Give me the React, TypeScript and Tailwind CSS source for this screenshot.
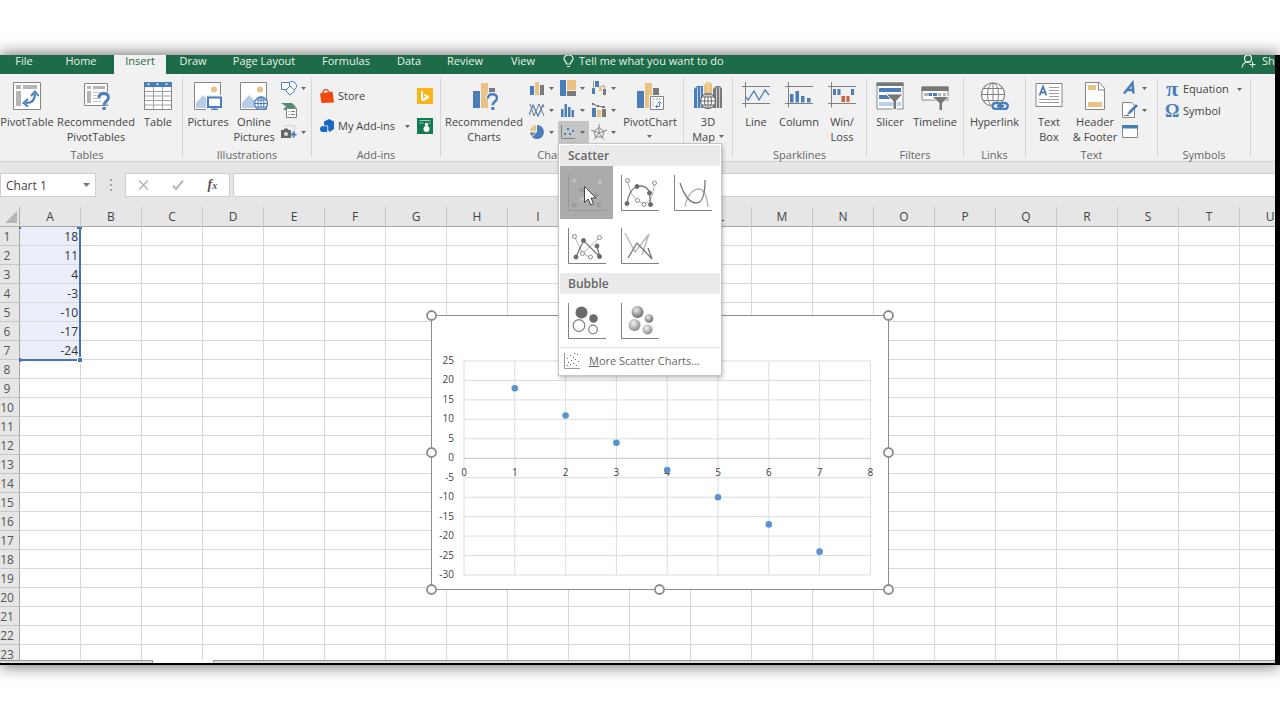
import type { ReactNode } from "react";

const BLUE = "#4a7ebb";
const TAN = "#eac282";
const GREY = "#7a7a7a";

const COLUMNS = "ABCDEFGHIJKLMNOPQRSTUVWXYZ".split("");
const ROWS = Array.from({ length: 23 }, (_, i) => i + 1);
const VALUES = [18, 11, 4, -3, -10, -17, -24];

const TABS = [
  { name: "File", width: "w-12" },
  { name: "Home", width: "w-[66px]" },
  { name: "Insert", width: "w-[52px]" },
  { name: "Draw", width: "w-[54px]" },
  { name: "Page Layout", width: "w-[88px]" },
  { name: "Formulas", width: "w-[76px]" },
  { name: "Data", width: "w-[50px]" },
  { name: "Review", width: "w-[62px]" },
  { name: "View", width: "w-[54px]" },
];

function Caret() {
  return (
    <svg width="5" height="3" viewBox="0 0 5 3" className="shrink-0">
      <path d="M0 0h5L2.5 3z" fill="#666" />
    </svg>
  );
}

function Icon({ size = 28, children }: { size?: number; children: ReactNode }) {
  return (
    <svg
      width={size}
      height={size}
      viewBox={`0 0 ${size} ${size}`}
      fill="none"
      className="shrink-0"
    >
      {children}
    </svg>
  );
}

/* Large icons, 28px */

function PivotTableIcon() {
  return (
    <Icon>
      <path d="M.5.5h27v27H.5z" fill="#fff" stroke="#858585" />
      <path d="M3 3h5v4H3zM10 3h14v4H10zM3 9h5v15H3z" fill="#b5b5b5" />
      <path d="M13 21c6 0 9-3 9-9" stroke={BLUE} strokeWidth="2.2" />
      <path
        d="M18 14l4-4.500 3.500 4.500M15 17l-4.500 4 4.500 3.500"
        stroke={BLUE}
        strokeWidth="2"
      />
    </Icon>
  );
}

function RecommendedPivotIcon() {
  return (
    <Icon>
      <path d="M2.500 1.500h23v22h-23z" fill="#fff" stroke="#858585" />
      <path d="M5 4h4v3H5zM11 4h12v3H11zM5 9h4v12H5z" fill="#b5b5b5" />
      <path d="M11 10.500h10M11 13.500h10M11 16.500h8M11 19.500h8" stroke="#c4c4c4" />
      <path
        d="M17 16c0-3 2-4.500 4.700-4.500s4.800 1.500 4.800 4.200c0 3.300-4.500 3.600-4.500 7.300"
        stroke="#f1f1f1"
        strokeWidth="5"
      />
      <path
        d="M17 16c0-3 2-4.500 4.700-4.500s4.800 1.500 4.800 4.200c0 3.300-4.500 3.600-4.500 7.300"
        stroke={BLUE}
        strokeWidth="2.800"
      />
      <path d="M20.500 25h3.200v3h-3.200z" fill={BLUE} />
    </Icon>
  );
}

function TableIcon() {
  return (
    <Icon>
      <path d="M.5.5h27v27H.5z" fill="#fff" stroke="#858585" />
      <path d="M0 0h28v5H0z" fill={BLUE} />
      <path d="M3 1.500h3L4.500 3.500zM12 1.500h3l-1.500 2zM21 1.500h3l-1.500 2z" fill="#fff" />
      <path d="M9.500 5v22M18.500 5v22M1 9.500h26M1 14h26M1 18.500h26M1 23h26" stroke="#a3a3a3" />
    </Icon>
  );
}

function PhotoBase() {
  return (
    <>
      <path d="M.5.5h26v27H.5z" fill="#fff" stroke="#858585" />
      <path d="M2 26v-5l7-8 13 13z" fill="#b9cce6" />
      <circle cx="20" cy="7.500" r="3" fill={TAN} />
    </>
  );
}

function PicturesIcon() {
  return (
    <Icon>
      <PhotoBase />
      <path d="M12 13h16v15H12z" fill="#f1f1f1" />
      <path d="M14 15.500h13v9.500H14z" fill="#fff" stroke={BLUE} strokeWidth="2" />
      <path d="M20.500 25v3M17 27.500h7" stroke={BLUE} strokeWidth="1.500" />
    </Icon>
  );
}

function OnlinePicturesIcon() {
  return (
    <Icon>
      <PhotoBase />
      <circle cx="21" cy="21.500" r="6.500" fill="#fff" stroke={BLUE} strokeWidth="1.300" />
      <ellipse cx="21" cy="21.500" rx="3" ry="6.500" stroke={BLUE} />
      <path d="M14.500 21.500h13M21 15v13M16 18h10M16 25h10" stroke={BLUE} />
    </Icon>
  );
}

function BarsBase() {
  return (
    <>
      <path d="M1 9h7v17H1z" fill={BLUE} />
      <path d="M9 1h7v25H9z" fill={TAN} />
      <path d="M17 6h6v9h-6z" fill={GREY} />
    </>
  );
}

function RecommendedChartsIcon() {
  return (
    <Icon>
      <g transform="translate(2 0)">
        <BarsBase />
        <path
          d="M16 16.500c0-2.800 2-4.300 4.500-4.300s4.500 1.500 4.500 4c0 3.200-4.300 3.400-4.300 7"
          stroke="#f1f1f1"
          strokeWidth="5"
        />
        <path
          d="M16 16.500c0-2.800 2-4.300 4.500-4.300s4.500 1.500 4.500 4c0 3.200-4.300 3.400-4.300 7"
          stroke={BLUE}
          strokeWidth="2.500"
        />
        <path d="M19.300 25h3v3h-3z" fill={BLUE} />
      </g>
    </Icon>
  );
}

function PivotChartIcon() {
  return (
    <Icon>
      <BarsBase />
      <path d="M13 13h15v15H13z" fill="#f1f1f1" />
      <path d="M14.500 14.500h13v13h-13z" fill="#fff" stroke="#858585" />
      <path d="M16.500 17h2M20 17h5.500M17 19.500v6" stroke="#999" strokeDasharray="2 1" />
      <path d="M20 24.500h3.500v-4M21.500 22.500l-2 2 2 2M21.500 21.500l2-2 2 2" stroke={BLUE} />
    </Icon>
  );
}

function MapIcon() {
  return (
    <Icon>
      <path d="M0 26V7l3-3h6v22z" fill={BLUE} />
      <path d="M10 26V3l3-3h3l2 2v24z" fill={TAN} />
      <path d="M19 26V7l3-3h4l2 3v19z" fill={GREY} />
      <path d="M3.500 5v21M6.500 5v21M14.500 1v25M22.500 5v21M25.500 5v21" stroke="#f1f1f1" strokeWidth=".7" />
      <circle cx="14" cy="19" r="7.500" fill="#fff" stroke="#6b6b6b" strokeWidth="1.200" />
      <ellipse cx="14" cy="19" rx="3.500" ry="7.500" stroke="#6b6b6b" />
      <path d="M6.500 19h15M14 11.500v15M8 15h12M8 23h12" stroke="#6b6b6b" />
    </Icon>
  );
}

function SparkAxis() {
  return <path d="M0 4.500h28M0 21.500h28M3.500 0v25.500" stroke="#808080" />;
}

function SparkLineIcon() {
  return (
    <Icon>
      <SparkAxis />
      <path d="M4 15l2 3 6-9 5 9 6-10 4 5" stroke={BLUE} strokeWidth="1.300" />
    </Icon>
  );
}

function SparkColumnIcon() {
  return (
    <Icon>
      <SparkAxis />
      <path d="M5 12h3.500v8.500H5zM10.500 9H14v11.500h-3.500zM16 14h3.500v6.500H16zM22 16h3.500v4.500H22z" fill={BLUE} />
    </Icon>
  );
}

function WinLossIcon() {
  return (
    <Icon>
      <SparkAxis />
      <path d="M5 7h3v6H5zM9.500 7h3v6h-3zM23 7h3v6h-3z" fill={BLUE} />
      <path d="M13.500 14H17v6h-3.500zM18.500 14h3v6h-3z" fill="#c8653d" />
    </Icon>
  );
}

function SlicerIcon() {
  return (
    <Icon>
      <path d="M1 1h26v26H1z" fill="#fff" stroke="#858585" />
      <path d="M.5.5h27V4H.5z" fill="#787878" />
      <path d="M3 6h22v4H3zM3 13h12v4H3z" fill={BLUE} />
      <path d="M3 20h22v4H3z" fill="#bdd0e9" />
      <path d="M10 12h17l-6.500 7v8.500h-3.500V19z" fill="#787878" stroke="#f1f1f1" />
    </Icon>
  );
}

function TimelineIcon() {
  return (
    <Icon>
      <path d="M1 5h26v13H1z" fill="#fff" stroke="#858585" />
      <path d="M.5 4.500h27V9H.5z" fill="#787878" />
      <path d="M3 11h4v3H3zM17 11h3v3h-3zM22 11h3v3h-3z" fill="#b5b5b5" />
      <path d="M7.500 11H11v3H7.500zM12 11h4v3h-4z" fill={BLUE} />
      <path d="M11 14.500h17L21.500 21v7.500H18V21z" fill="#787878" stroke="#f1f1f1" />
    </Icon>
  );
}

function HyperlinkIcon() {
  return (
    <Icon>
      <circle cx="12" cy="12.500" r="11.500" fill="#fff" stroke="#808080" strokeWidth="1.200" />
      <ellipse cx="12" cy="12.500" rx="5.500" ry="11.500" stroke="#808080" />
      <path d="M.5 12.500h23M12 1v23M2.500 6.500h19M2.500 18.500h19" stroke="#808080" />
      <path d="M10 19.500h18V28H10z" fill="#f1f1f1" />
      <rect x="11.500" y="21" width="9" height="6" rx="3" stroke={BLUE} strokeWidth="2.400" />
      <rect x="17.800" y="21" width="9" height="6" rx="3" stroke={BLUE} strokeWidth="2.400" />
      <path d="M16 24h7" stroke={BLUE} strokeWidth="2" />
    </Icon>
  );
}

function TextBoxIcon() {
  return (
    <Icon>
      <path d="M1 1.500h26v23H1z" fill="#fff" stroke="#858585" />
      <path d="M4.500 13.500L8 4.500l3.500 9M6 10.500h4" stroke={BLUE} strokeWidth="1.800" />
      <path d="M14 5.500h10M14 8.500h10M14 11.500h10M14 14.500h10M4 17.500h20M4 20.500h20" stroke="#a0a0a0" />
    </Icon>
  );
}

function HeaderFooterIcon() {
  return (
    <Icon>
      <path d="M4.500.5h14l5 6v21h-19z" fill="#fff" stroke="#858585" />
      <path d="M17.500 1v7h6" stroke="#858585" />
      <path d="M7 3h8v5H7zM7 20h14v5H7z" fill={TAN} />
    </Icon>
  );
}

/* Small icons */

function ShapesIcon() {
  return (
    <Icon size={16}>
      <circle cx="11" cy="6" r="4.500" fill="#fff" stroke={BLUE} />
      <path d="M.5 2.500h8v7h-8z" fill="#fff" stroke={BLUE} />
      <path d="M9 6l5 4.500-5 4.500-4.500-4.500z" fill="#fff" stroke={BLUE} />
    </Icon>
  );
}

function SmartArtIcon() {
  return (
    <Icon size={16}>
      <path d="M0 1h11l4 4-3 3H2l3-3.500z" fill="#4f8f70" />
      <path d="M5.500 6.500h10v9h-10z" fill="#fff" stroke="#808080" />
      <path d="M7.500 9.500h1M10 9.500h4M7.500 12.500h1M10 12.500h4" stroke="#808080" />
    </Icon>
  );
}

function ScreenshotIcon() {
  return (
    <Icon size={16}>
      <path d="M3.500 1.500h10v11" stroke="#b5b5b5" strokeDasharray="1 1" />
      <path d="M0 6h2.500l1-1.500h3l1 1.500H10v8H0z" fill="#666" />
      <circle cx="5" cy="10" r="2" fill="#ddd" />
      <path d="M12.500 7.500v6M9.500 10.500h6" stroke={BLUE} strokeWidth="2" />
    </Icon>
  );
}

function StoreIcon() {
  return (
    <Icon size={14}>
      <path d="M0 4.500L12.500 2.500l1.500 11L1.500 14z" fill="#f4480f" />
      <path d="M3 5V3c0-2.500 5-3.500 5.500-.5v1" stroke="#f4480f" strokeWidth="1.300" />
    </Icon>
  );
}

function AddinsIcon() {
  return (
    <Icon size={14}>
      <path d="M4 2.500L9 0l5 2.500v7.500l-4.500 3-2-3L4 6.500z" fill="#1a69c4" />
      <path d="M0 10c0-2 1.500-3 3-3h4.500v6H2.500C1 13 0 12 0 10z" fill="#1a69c4" />
      <path d="M3 6.800h4.700v6" stroke="#f1f1f1" strokeWidth=".8" />
    </Icon>
  );
}

function BingIcon() {
  return (
    <Icon size={16}>
      <path d="M0 0h16v16H0z" fill="#fbb41a" />
      <path d="M4 3l2 .700v6.800l3-1.800-1.400-.700L6.800 6l5.200 2v2l-5.500 3.200L4 12z" fill="#fff" />
    </Icon>
  );
}

function PeopleGraphIcon() {
  return (
    <Icon size={16}>
      <path d="M0 0h16v16H0z" fill="#137a52" />
      <path d="M2.500 2.500h11M2.500 5h4M11.500 5h2" stroke="#9fcdb8" />
      <circle cx="9.500" cy="6.500" r="1.700" fill="#fff" />
      <circle cx="9.500" cy="11" r="3" fill="#fff" />
    </Icon>
  );
}

function ColumnChartIcon() {
  return (
    <Icon size={16}>
      <path d="M1 6h4v9H1z" fill={BLUE} />
      <path d="M6 2h4v13H6z" fill={TAN} />
      <path d="M11 5h4v10h-4z" fill={GREY} />
    </Icon>
  );
}

function HierarchyIcon() {
  return (
    <Icon size={16}>
      <path d="M0 0h6v16H0z" fill={BLUE} />
      <path d="M7 0h9v10H7z" fill={TAN} />
      <path d="M7 11h9v5H7z" fill={GREY} />
    </Icon>
  );
}

function WaterfallIcon() {
  return (
    <Icon size={16}>
      <path d="M1 8h3v6H1zM4 1h4v6H4z" fill={BLUE} />
      <path d="M8 6h3v5H8z" fill={TAN} />
      <path d="M12 9h3v6h-3z" fill={GREY} />
      <path d="M2.500 1v8M10.500 6h3v4" stroke="#999" />
    </Icon>
  );
}

function LineChartIcon() {
  return (
    <Icon size={16}>
      <path d="M1 2l4 12 5-12 5 12" stroke="#777" />
      <path d="M0 13L4 3l5 11 5-11 1 2" stroke={BLUE} strokeWidth="1.200" />
    </Icon>
  );
}

function HistogramIcon() {
  return (
    <Icon size={16}>
      <path d="M1 7h2.500v8H1zM4.500 2H7v13H4.500zM8 5h2.500v10H8zM11.500 8H14v7h-2.500z" fill={BLUE} />
    </Icon>
  );
}

function ComboIcon() {
  return (
    <Icon size={16}>
      <path d="M1 6h4v9H1z" fill={BLUE} />
      <path d="M6 8h4v7H6z" fill={TAN} />
      <path d="M11 7h4v8h-4z" fill={GREY} />
      <path d="M2 2l5 2 5 1" stroke="#777" />
      <path d="M1 1h2v2H1zM6 3h2v2H6zM11 4h3v2h-3z" fill="#777" />
    </Icon>
  );
}

function PieIcon() {
  return (
    <Icon size={16}>
      <path d="M8 8V1a7 7 0 1 1-5 12z" fill={BLUE} />
      <path d="M7 7H1a6.500 6.500 0 0 1 6-6z" fill={TAN} />
      <path d="M7 8.500L2.500 12A7 7 0 0 1 1 8.500z" fill={GREY} />
    </Icon>
  );
}

function ScatterIcon() {
  return (
    <Icon size={16}>
      <path d="M1.500 1v13.500H15" stroke="#808080" />
      <path d="M4 9h2v2H4zM7 4h2v2H7zM9 9h2v2H9zM12 6h2v2h-2z" fill={BLUE} />
    </Icon>
  );
}

function RadarIcon() {
  return (
    <Icon size={16}>
      <path d="M8 0v9M0 6l8 3 8-3M3 15.500L8 9l5 6.500" stroke="#858585" />
      <path d="M8 3.500L13 7.500 11.500 13H4.500L3 7.500z" stroke="#858585" />
    </Icon>
  );
}

function WordArtIcon() {
  return (
    <Icon size={16}>
      <path d="M2 13.500L10.500 3l1 10.500M5.500 10h6" stroke={BLUE} strokeWidth="2.500" />
    </Icon>
  );
}

function SignatureIcon() {
  return (
    <Icon size={16}>
      <path d="M.5.5h9l3 3v12H.5z" fill="#fff" stroke="#858585" />
      <path d="M5 13l2-4 7-7 2 2-7 7z" fill={BLUE} />
      <path d="M2 13.500h5" stroke="#777" />
    </Icon>
  );
}

function ObjectIcon() {
  return (
    <Icon size={16}>
      <path d="M.5 1.500h15v12H.5z" fill="#fff" stroke="#858585" />
      <path d="M0 1h16v3.500H0z" fill={BLUE} />
    </Icon>
  );
}

/* Ribbon building blocks */

function Group({
  label,
  width,
  labelClass = "",
  children,
}: {
  label: string;
  width: string;
  labelClass?: string;
  children: ReactNode;
}) {
  return (
    <section className={`flex shrink-0 ${width}`} aria-label={label || "Tours"}>
      <div className="flex min-w-0 flex-1 flex-col">
        <div className="flex flex-1 items-start">{children}</div>
        <div
          className={`text-center text-[11px] leading-3 text-[#666] ${labelClass}`}
        >
          {label}
        </div>
      </div>
      <div className="my-1 w-px bg-[#d6d6d6]" />
    </section>
  );
}

function BigButton({
  icon,
  lines,
  width,
  caret,
}: {
  icon: ReactNode;
  lines: string[];
  width: string;
  caret?: boolean;
}) {
  return (
    <button
      className={`flex shrink-0 flex-col items-center pt-2 leading-[15px] ${width}`}
    >
      {icon}
      <span className="mt-1 flex flex-col items-center whitespace-nowrap">
        {lines.map((line, i) => (
          <span key={line} className="flex items-center gap-1">
            {line}
            {caret && i === 1 && <Caret />}
          </span>
        ))}
        {caret && lines.length === 1 && (
          <span className="flex h-[15px] items-center">
            <Caret />
          </span>
        )}
      </span>
    </button>
  );
}

function SmallButton({
  icon,
  label,
  caret = true,
  active,
}: {
  icon: ReactNode;
  label: string;
  caret?: boolean;
  active?: boolean;
}) {
  return (
    <button
      aria-label={label}
      className={`flex h-[22px] w-[31px] items-center gap-1 pl-[2px] ${active ? "bg-[#c5c5c5]" : ""}`}
    >
      {icon}
      {caret && <Caret />}
    </button>
  );
}

/* Scatter gallery */

type Pt = [number, number];

function Dots({ points, open }: { points: Pt[]; open?: boolean }) {
  return (
    <>
      {points.map(([x, y]) => (
        <circle
          key={`${x}-${y}`}
          cx={x}
          cy={y}
          r={2}
          fill={open ? "#fff" : "#6b6b6b"}
          stroke={open ? "#8a8a8a" : "#6b6b6b"}
        />
      ))}
    </>
  );
}

function GalleryItem({
  label,
  selected,
  children,
}: {
  label: string;
  selected?: boolean;
  children: ReactNode;
}) {
  return (
    <button
      aria-label={label}
      className={`h-[53px] w-[53px] p-2 ${selected ? "bg-[#ababab]" : ""}`}
    >
      <svg width="38" height="36" viewBox="0 0 38 36" fill="none">
        <path d="M.5 0v35.500H38" stroke={selected ? "#999" : "#808080"} />
        {children}
      </svg>
    </button>
  );
}

function GalleryHeading({ children }: { children: ReactNode }) {
  return (
    <h3 className="h-[21px] bg-[#ebebeb] pl-2 text-xs leading-[22px] font-semibold text-[#666]">
      {children}
    </h3>
  );
}

function ScatterMenu() {
  return (
    <div className="absolute top-full left-0 z-20 w-[164px] border border-[#c6c6c6] bg-white p-px shadow-[1px_2px_4px_rgba(0,0,0,0.25)]">
      <GalleryHeading>Scatter</GalleryHeading>
      <div className="relative grid grid-cols-[53px_53px_53px] pb-px">
        <GalleryItem label="Scatter" selected>
          <g fill="#bdbdbd" stroke="#c9c9c9">
            <circle cx="6.500" cy="5.500" r="1.500" />
            <circle cx="32" cy="7" r="1.500" />
            <circle cx="14" cy="24" r="1.500" />
          </g>
          <g fill="#9b9b9b">
            <circle cx="6" cy="30" r="2.500" />
            <circle cx="31" cy="30" r="2.500" />
            <circle cx="14" cy="15" r="2.500" />
            <circle cx="28" cy="20" r="2.500" />
          </g>
        </GalleryItem>
        <GalleryItem label="Scatter with Smooth Lines and Markers">
          <path d="M6.500 5.500C8 14 11 22 16.500 25.500S31 33 33.500 8" stroke="#b0b0b0" />
          <path d="M6 28.500C7 20 11 13 16 11.500S27 12 28.500 18l1 11.500" stroke="#777" strokeWidth="1.300" />
          <Dots open points={[[6.5, 5.5], [16.5, 25.5], [23, 29.5], [33.5, 8]]} />
          <Dots points={[[6, 28.5], [16, 11.5], [28.5, 18], [29.5, 29.5]]} />
        </GalleryItem>
        <GalleryItem label="Scatter with Smooth Lines">
          <path d="M11 32C13 20 19 14 25 14s8 8 9 18" stroke="#b5b5b5" strokeWidth="1.300" />
          <path d="M6 8c3 10 9 20 16 20s9-10 9-23" stroke="#777" strokeWidth="1.300" />
        </GalleryItem>
        <GalleryItem label="Scatter with Straight Lines and Markers">
          <path d="M6.500 8.500l8 17 17-16M14.500 25.500l8 4" stroke="#b0b0b0" />
          <path d="M8 29l7.500-16.500L31.500 28.500 29 18" stroke="#777" strokeWidth="1.300" />
          <Dots open points={[[6.5, 8.5], [14.5, 25.5], [22.5, 29], [31.5, 9.5]]} />
          <Dots points={[[8, 29], [15.5, 12.5], [29, 18], [31.5, 28.5]]} />
        </GalleryItem>
        <GalleryItem label="Scatter with Straight Lines">
          <path d="M4 5l10 19L28 6l-7 21" stroke="#b5b5b5" strokeWidth="1.300" />
          <path d="M7 30l9-15 15 16-4-11" stroke="#777" strokeWidth="1.300" />
        </GalleryItem>
        {/* mouse pointer */}
        <svg
          width="13"
          height="20"
          viewBox="0 0 13 20"
          className="absolute top-5 left-6"
        >
          <path
            d="M.500 .500v16l3.700-3.500 2.500 6 2.800-1.200-2.500-5.800H12z"
            fill="#fff"
            stroke="#444"
          />
        </svg>
      </div>
      <GalleryHeading>Bubble</GalleryHeading>
      <div className="grid grid-cols-[53px_53px_53px]">
        <GalleryItem label="Bubble">
          <circle cx="13.500" cy="9.500" r="6" fill="#6b6b6b" />
          <circle cx="25.500" cy="15.500" r="4.300" fill="#6b6b6b" />
          <circle cx="11" cy="22.500" r="5.800" fill="#fff" stroke="#808080" strokeWidth="1.200" />
          <circle cx="25" cy="26.500" r="4.300" fill="#fff" stroke="#808080" strokeWidth="1.200" />
        </GalleryItem>
        <GalleryItem label="3-D Bubble">
          <defs>
            <radialGradient id="ball-dark" cx=".4" cy=".35" r=".65">
              <stop offset="0" stopColor="#ececec" />
              <stop offset="1" stopColor="#6b6b6b" />
            </radialGradient>
            <radialGradient id="ball-light" cx=".4" cy=".35" r=".65">
              <stop offset="0" stopColor="#f2f2f2" />
              <stop offset="1" stopColor="#8c8c8c" />
            </radialGradient>
          </defs>
          <circle cx="16.500" cy="9" r="6" fill="url(#ball-dark)" />
          <circle cx="28" cy="15.500" r="4.300" fill="url(#ball-dark)" />
          <circle cx="13.500" cy="22" r="6" fill="url(#ball-light)" />
          <circle cx="26.500" cy="26.500" r="5" fill="url(#ball-light)" />
        </GalleryItem>
      </div>
      <button className="flex h-[27px] w-full items-center gap-[9px] border-t border-[#e1e1e1] pl-1 whitespace-nowrap text-[#666]">
        <Icon size={16}>
          <path d="M.5 0v15.500H16" stroke="#999" />
          <path
            d="M3 5h1v1H3zM6 2h1v1H6zM9 4h1v1H9zM13 1h1v1h-1zM4 9h1v1H4zM7 7h1v1H7zM11 6h1v1h-1zM14 8h1v1h-1zM3 12h1v1H3zM6 11h1v1H6zM9 10h1v1H9zM12 12h1v1h-1zM10 0h1v1h-1z"
            fill="#666"
          />
        </Icon>
        <span>
          <u>M</u>ore Scatter Charts...
        </span>
      </button>
    </div>
  );
}

function Ribbon() {
  return (
    <div className="relative z-10 flex h-[88px] border-b border-[#d2d2d2] bg-[#f1f1f1] text-[11px] text-[#444]">
      <Group label="Tables" width="w-[183px]" labelClass="pr-2">
        <BigButton icon={<PivotTableIcon />} lines={["PivotTable"]} width="w-[54px]" />
        <BigButton
          icon={<RecommendedPivotIcon />}
          lines={["Recommended", "PivotTables"]}
          width="w-[84px]"
        />
        <BigButton icon={<TableIcon />} lines={["Table"]} width="w-10" />
      </Group>

      <Group label="Illustrations" width="w-[129px]">
        <BigButton icon={<PicturesIcon />} lines={["Pictures"]} width="w-[50px]" />
        <BigButton
          icon={<OnlinePicturesIcon />}
          lines={["Online", "Pictures"]}
          width="w-[42px]"
        />
        <div className="pl-1 pt-[3px]">
          <SmallButton icon={<ShapesIcon />} label="Shapes" />
          <SmallButton icon={<SmartArtIcon />} label="SmartArt" caret={false} />
          <SmallButton icon={<ScreenshotIcon />} label="Screenshot" />
        </div>
      </Group>

      <Group label="Add-ins" width="w-[129px]">
        <div className="flex w-full justify-between pt-2 pr-[7px] pl-2">
          <div className="flex flex-col gap-[10px]">
            <button className="flex h-5 items-center gap-1 pt-2">
              <StoreIcon /> Store
            </button>
            <button className="flex h-5 items-center gap-1 pt-2">
              <AddinsIcon /> My Add-ins
              <span className="ml-[6px]">
                <Caret />
              </span>
            </button>
          </div>
          <div className="flex flex-col gap-[14px] pt-[6px]">
            <button aria-label="Bing Maps">
              <BingIcon />
            </button>
            <button aria-label="People Graph">
              <PeopleGraphIcon />
            </button>
          </div>
        </div>
      </Group>

      <Group label="Charts" width="w-[243px]" labelClass="pr-4">
        <BigButton
          icon={<RecommendedChartsIcon />}
          lines={["Recommended", "Charts"]}
          width="w-[86px]"
        />
        <div className="grid grid-cols-3 pt-[3px]">
          <SmallButton icon={<ColumnChartIcon />} label="Column chart" />
          <SmallButton icon={<HierarchyIcon />} label="Hierarchy chart" />
          <SmallButton icon={<WaterfallIcon />} label="Waterfall chart" />
          <SmallButton icon={<LineChartIcon />} label="Line chart" />
          <SmallButton icon={<HistogramIcon />} label="Statistic chart" />
          <SmallButton icon={<ComboIcon />} label="Combo chart" />
          <SmallButton icon={<PieIcon />} label="Pie chart" />
          <div className="relative">
            <SmallButton icon={<ScatterIcon />} label="Scatter chart" active />
            <ScatterMenu />
          </div>
          <SmallButton icon={<RadarIcon />} label="Radar chart" />
        </div>
        <BigButton icon={<PivotChartIcon />} lines={["PivotChart"]} width="w-[60px]" caret />
      </Group>

      <Group label="" width="w-[49px]">
        <BigButton icon={<MapIcon />} lines={["3D", "Map"]} width="w-12" caret />
      </Group>

      <Group label="Sparklines" width="w-[134px]">
        <BigButton icon={<SparkLineIcon />} lines={["Line"]} width="w-[46px]" />
        <BigButton icon={<SparkColumnIcon />} lines={["Column"]} width="w-10" />
        <BigButton icon={<WinLossIcon />} lines={["Win/", "Loss"]} width="w-[46px]" />
      </Group>

      <Group label="Filters" width="w-[97px]">
        <BigButton icon={<SlicerIcon />} lines={["Slicer"]} width="w-[46px]" />
        <BigButton icon={<TimelineIcon />} lines={["Timeline"]} width="w-[44px]" />
      </Group>

      <Group label="Links" width="w-[62px]">
        <BigButton icon={<HyperlinkIcon />} lines={["Hyperlink"]} width="w-[61px]" />
      </Group>

      <Group label="Text" width="w-[132px]">
        <BigButton icon={<TextBoxIcon />} lines={["Text", "Box"]} width="w-[46px]" />
        <BigButton icon={<HeaderFooterIcon />} lines={["Header", "& Footer"]} width="w-[46px]" />
        <div className="pl-[2px] pt-[3px]">
          <SmallButton icon={<WordArtIcon />} label="WordArt" />
          <SmallButton icon={<SignatureIcon />} label="Signature Line" />
          <SmallButton icon={<ObjectIcon />} label="Object" caret={false} />
        </div>
      </Group>

      <Group label="Symbols" width="w-[93px]">
        <div className="pt-1 pl-[7px]">
          <button className="flex h-[22px] items-center gap-1 whitespace-nowrap">
            <span className="w-[14px] text-center font-['Liberation_Serif',serif] text-[22px] leading-none font-bold text-[#4a7ebb]">
              π
            </span>
            Equation
            <span className="ml-1">
              <Caret />
            </span>
          </button>
          <button className="flex h-[22px] items-center gap-1">
            <span className="w-[14px] text-center font-['Liberation_Serif',serif] text-lg leading-none font-bold text-[#4a7ebb]">
              Ω
            </span>
            Symbol
          </button>
        </div>
      </Group>
    </div>
  );
}

function TabBar() {
  return (
    <nav className="flex h-[19px] bg-[#1e6b47] text-[11px] leading-3 font-medium text-[#e8f2ec]">
      {TABS.map((tab) => (
        <button
          key={tab.name}
          className={`flex shrink-0 justify-center whitespace-nowrap ${tab.width} ${
            tab.name === "Insert" ? "bg-[#f1f1f1] text-[#1e6b47]" : ""
          }`}
        >
          {tab.name}
        </button>
      ))}
      <button className="flex items-start gap-[5px] pl-[13px] whitespace-nowrap">
        <svg width="11" height="13" viewBox="0 0 11 13" fill="none">
          <path
            d="M3.500 9C3.500 6.500 1 6 1 3.500 1 1.500 3 0 5.500 0S10 1.500 10 3.500C10 6 7.500 6.500 7.500 9zM4 11.500h3"
            stroke="#e8f2ec"
            strokeWidth="1.200"
          />
        </svg>
        Tell me what you want to do
      </button>
      <button className="ml-auto flex w-[34px] shrink-0 gap-[6px] whitespace-nowrap">
        <svg width="15" height="13" viewBox="0 0 15 13" fill="none" className="shrink-0">
          <circle cx="7" cy="3.500" r="3.500" stroke="#e8f2ec" strokeWidth="1.200" />
          <path d="M1 12.500C1.500 9 4 7 7 7l2 .5M11.500 6.500v6M8.500 9.500h6" stroke="#e8f2ec" strokeWidth="1.200" />
        </svg>
        Share
      </button>
    </nav>
  );
}

function FormulaBar() {
  return (
    <div className="flex h-[45px] bg-[#e6e6e6] pt-[11px] text-xs text-[#444]">
      <div className="flex h-6 w-24 items-center border border-[#cfcfcf] bg-white">
        <input
          aria-label="Name Box"
          defaultValue="Chart 1"
          className="w-[82px] bg-transparent pt-[2px] pl-[5px] outline-none"
        />
        <svg width="7" height="4" viewBox="0 0 7 4">
          <path d="M0 0h7L3.500 4z" fill="#777" />
        </svg>
      </div>
      <div className="flex h-6 w-[29px] flex-col items-center justify-center gap-[3px]">
        <i className="size-[2px] bg-[#a8a8a8]" />
        <i className="size-[2px] bg-[#a8a8a8]" />
        <i className="size-[2px] bg-[#a8a8a8]" />
      </div>
      <div className="flex h-6 w-[105px] items-center justify-around border border-[#cfcfcf] bg-white">
        <button aria-label="Cancel">
          <svg width="11" height="10" viewBox="0 0 11 10">
            <path d="M1 .5l9 9M10 .5l-9 9" stroke="#b5b5b5" strokeWidth="1.500" />
          </svg>
        </button>
        <button aria-label="Enter">
          <svg width="12" height="10" viewBox="0 0 12 10" fill="none">
            <path d="M1 5.500L4 9l7-8.500" stroke="#b5b5b5" strokeWidth="2" />
          </svg>
        </button>
        <button
          aria-label="Insert Function"
          className="font-['Liberation_Serif',serif] text-sm leading-none font-bold italic text-[#555]"
        >
          f<span className="text-[10px]">x</span>
        </button>
      </div>
      <input
        aria-label="Formula Bar"
        className="ml-[3px] h-6 min-w-0 flex-1 border-y border-l border-[#cfcfcf] bg-white px-2 outline-none"
      />
    </div>
  );
}

/* Plot area: x 0..8 and y -30..25 */
const px = (x: number) => 33 + x * 50.8;
const py = (y: number) => 46 + ((25 - y) / 55) * 214;

function ScatterChart() {
  const xs = [0, 1, 2, 3, 4, 5, 6, 7, 8];
  const ys = [25, 20, 15, 10, 5, 0, -5, -10, -15, -20, -25, -30];
  const handles: Pt[] = [
    [0, 0], [228, 0], [457, 0], [0, 137], [457, 137], [0, 274], [228, 274], [457, 274],
  ];
  return (
    <svg
      width="458"
      height="275"
      viewBox="0 0 458 275"
      className="absolute top-[108px] left-[431px] overflow-visible"
      role="img"
      aria-label="Scatter chart"
    >
      <rect x="0.5" y="0.5" width="457" height="274" fill="#fff" stroke="#8c8c8c" />
      {xs.map((x) => (
        <path key={x} d={`M${px(x)} ${py(25)}V${py(-30)}`} stroke="#dcdcdc" />
      ))}
      {ys.map((y) => (
        <path
          key={y}
          d={`M${px(0)} ${py(y)}H${px(8)}`}
          stroke={y === 0 ? "#c0c0c0" : "#dcdcdc"}
        />
      ))}
      <g fontSize="10" fill="#444">
        {ys.map((y) => (
          <text key={y} x="23" y={py(y) + 3} textAnchor="end">
            {y}
          </text>
        ))}
        {xs.map((x) => (
          <text key={x} x={px(x)} y="161" textAnchor="middle">
            {x}
          </text>
        ))}
      </g>
      {VALUES.map((v, i) => (
        <circle key={v} cx={px(i + 1)} cy={py(v)} r="3.300" fill="#5b93cf" />
      ))}
      {handles.map(([x, y]) => (
        <circle
          key={`${x}-${y}`}
          cx={x + 0.5}
          cy={y + 0.5}
          r="4.500"
          fill="#fff"
          stroke="#8c8c8c"
          strokeWidth="1.800"
        />
      ))}
    </svg>
  );
}

function Sheet() {
  return (
    <div className="relative min-h-0 flex-1 overflow-hidden bg-white">
      <table className="w-[1606px] table-fixed border-separate border-spacing-0 text-xs leading-4">
        <colgroup>
          <col className="w-5" />
          {COLUMNS.map((c) => (
            <col key={c} className="w-[61px]" />
          ))}
        </colgroup>
        <thead>
          <tr className="bg-[#e6e6e6] text-[#444]">
            <th className="h-5 border-r border-b border-[#b0b0b0] p-0">
              <svg width="12" height="12" viewBox="0 0 12 12" className="ml-[5px]">
                <path d="M12 0v12H0z" fill="#b5b5b5" />
              </svg>
            </th>
            {COLUMNS.map((c) => (
              <th
                key={c}
                scope="col"
                className="h-5 border-r border-b border-r-[#c6c6c6] border-b-[#a6a6a6] p-0 font-normal"
              >
                {c}
              </th>
            ))}
          </tr>
        </thead>
        <tbody>
          {ROWS.map((row) => (
            <tr key={row}>
              <th
                scope="row"
                className="h-[19px] border-r border-b border-r-[#a6a6a6] border-b-[#c6c6c6] bg-[#e6e6e6] p-0 pt-[2px] pr-[5px] font-normal text-[#555]"
              >
                {row}
              </th>
              {COLUMNS.map((c) => {
                const filled = c === "A" && row <= VALUES.length;
                return (
                  <td
                    key={c}
                    className={`h-[19px] border-r border-b border-[#d9d9d9] p-0 pt-[2px] pr-[2px] text-right text-[#333] ${
                      filled ? "bg-[#e9eef9]" : ""
                    }`}
                  >
                    {filled ? VALUES[row - 1] : ""}
                  </td>
                );
              })}
            </tr>
          ))}
        </tbody>
      </table>

      {/* Range selection */}
      <div className="pointer-events-none absolute top-5 left-[19px] h-[134px] w-[62px] border-r-2 border-b-2 border-[#4472b4]">
        <i className="absolute -right-[4px] -bottom-[4px] box-content size-1 border border-white bg-[#4472b4]" />
        <i className="absolute top-0 -right-[3px] h-[2px] w-[5px] bg-[#4472b4]" />
        <i className="absolute -bottom-[3px] left-0 h-1 w-[2px] bg-[#4472b4]" />
        <i className="absolute top-0 left-0 size-[2px] bg-[#4472b4]" />
      </div>

      <ScatterChart />
    </div>
  );
}

export default function App() {
  return (
    <div className="flex h-screen flex-col overflow-hidden bg-white py-[55px] font-['Open_Sans','Noto_Sans',sans-serif]">
      <div className="flex min-h-0 flex-1 flex-col overflow-hidden border-r-[5px] border-b-2 border-black bg-white shadow-[0_0_16px_rgba(0,0,0,0.65)]">
        <TabBar />
        <Ribbon />
        <FormulaBar />
        <Sheet />
        <div className="flex h-[3px] shrink-0">
          <div className="w-[153px] border-t border-r border-[#999] bg-[#dedede]" />
          <div className="w-[60px] bg-white" />
          <div className="flex-1 border-t border-l border-[#999] bg-[#dedede]" />
        </div>
      </div>
    </div>
  );
}
